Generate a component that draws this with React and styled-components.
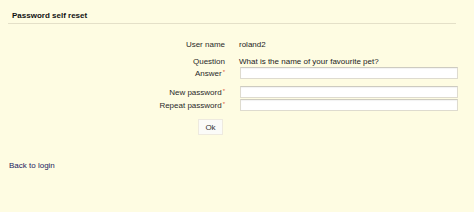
import styled, { createGlobalStyle } from "styled-components";

const GlobalStyle = createGlobalStyle`
  html, body {
    margin: 0;
    padding: 0;
    background: #fefce2;
  }
  body {
    font-family: "Liberation Sans", Arial, sans-serif;
    font-size: 8px;
    color: #222;
  }
`;

const Page = styled.div`
  padding: 8px 18px 0 8px;
  min-height: 204px;
`;

const Header = styled.div`
  padding: 3px 0 2px 4px;
  border-bottom: 1px solid #e4e0c8;
`;

const Title = styled.h1`
  margin: 0;
  font-size: 8px;
  font-weight: bold;
  color: #111;
  line-height: 10px;
`;

const Form = styled.form`
  display: flex;
  flex-direction: column;
  margin-top: 14px;
`;

const Row = styled.div`
  display: grid;
  grid-template-columns: 217px 1fr;
  column-gap: 14px;
  align-items: center;
  height: ${(p) => p.$h || 12}px;
  margin-top: ${(p) => p.$mt || 0}px;
`;

const Label = styled.label`
  text-align: right;
  color: #2a2a2a;
  white-space: nowrap;
`;

const Required = styled.span`
  color: #e05a3a;
  font-size: 6px;
  vertical-align: top;
  margin-left: 1px;
`;

const Value = styled.span`
  color: #222;
`;

const Input = styled.input`
  box-sizing: border-box;
  width: 218px;
  height: 12px;
  margin: 0;
  margin-left: 1px;
  padding: 0 2px;
  border: 1px solid #dedbcf;
  border-top-color: #cdcbc0;
  background: #fff;
  box-shadow: inset 0 1px 1px rgba(0, 0, 0, 0.05);
  font: inherit;
  outline: none;
`;

const Button = styled.button`
  grid-column: 1;
  justify-self: end;
  box-sizing: border-box;
  width: 25px;
  height: 16px;
  margin-right: 2px;
  padding: 0;
  border: 1px solid #eeeadf;
  background: #fbfbf8;
  color: #333;
  font: inherit;
  font-size: 8px;
  cursor: pointer;
`;

const BackLink = styled.a`
  display: inline-block;
  margin-top: 26px;
  margin-left: 1px;
  color: #1c1a5e;
  text-decoration: none;
  cursor: pointer;
`;

export default function App() {
  return (
    <>
      <GlobalStyle />
      <Page>
        <Header>
          <Title>Password self reset</Title>
        </Header>
        <Form onSubmit={(e) => e.preventDefault()}>
          <Row>
            <Label>User name</Label>
            <Value>roland2</Value>
          </Row>
          <Row $mt={6} $h={11}>
            <Label>Question</Label>
            <Value>What is the name of your favourite pet?</Value>
          </Row>
          <Row>
            <Label>
              Answer<Required>*</Required>
            </Label>
            <Input type="text" />
          </Row>
          <Row $mt={7}>
            <Label>
              New password<Required>*</Required>
            </Label>
            <Input type="password" />
          </Row>
          <Row $mt={1}>
            <Label>
              Repeat password<Required>*</Required>
            </Label>
            <Input type="password" />
          </Row>
          <Row $mt={8} $h={16}>
            <Button type="submit">Ok</Button>
          </Row>
        </Form>
        <BackLink>Back to login</BackLink>
      </Page>
    </>
  );
}
